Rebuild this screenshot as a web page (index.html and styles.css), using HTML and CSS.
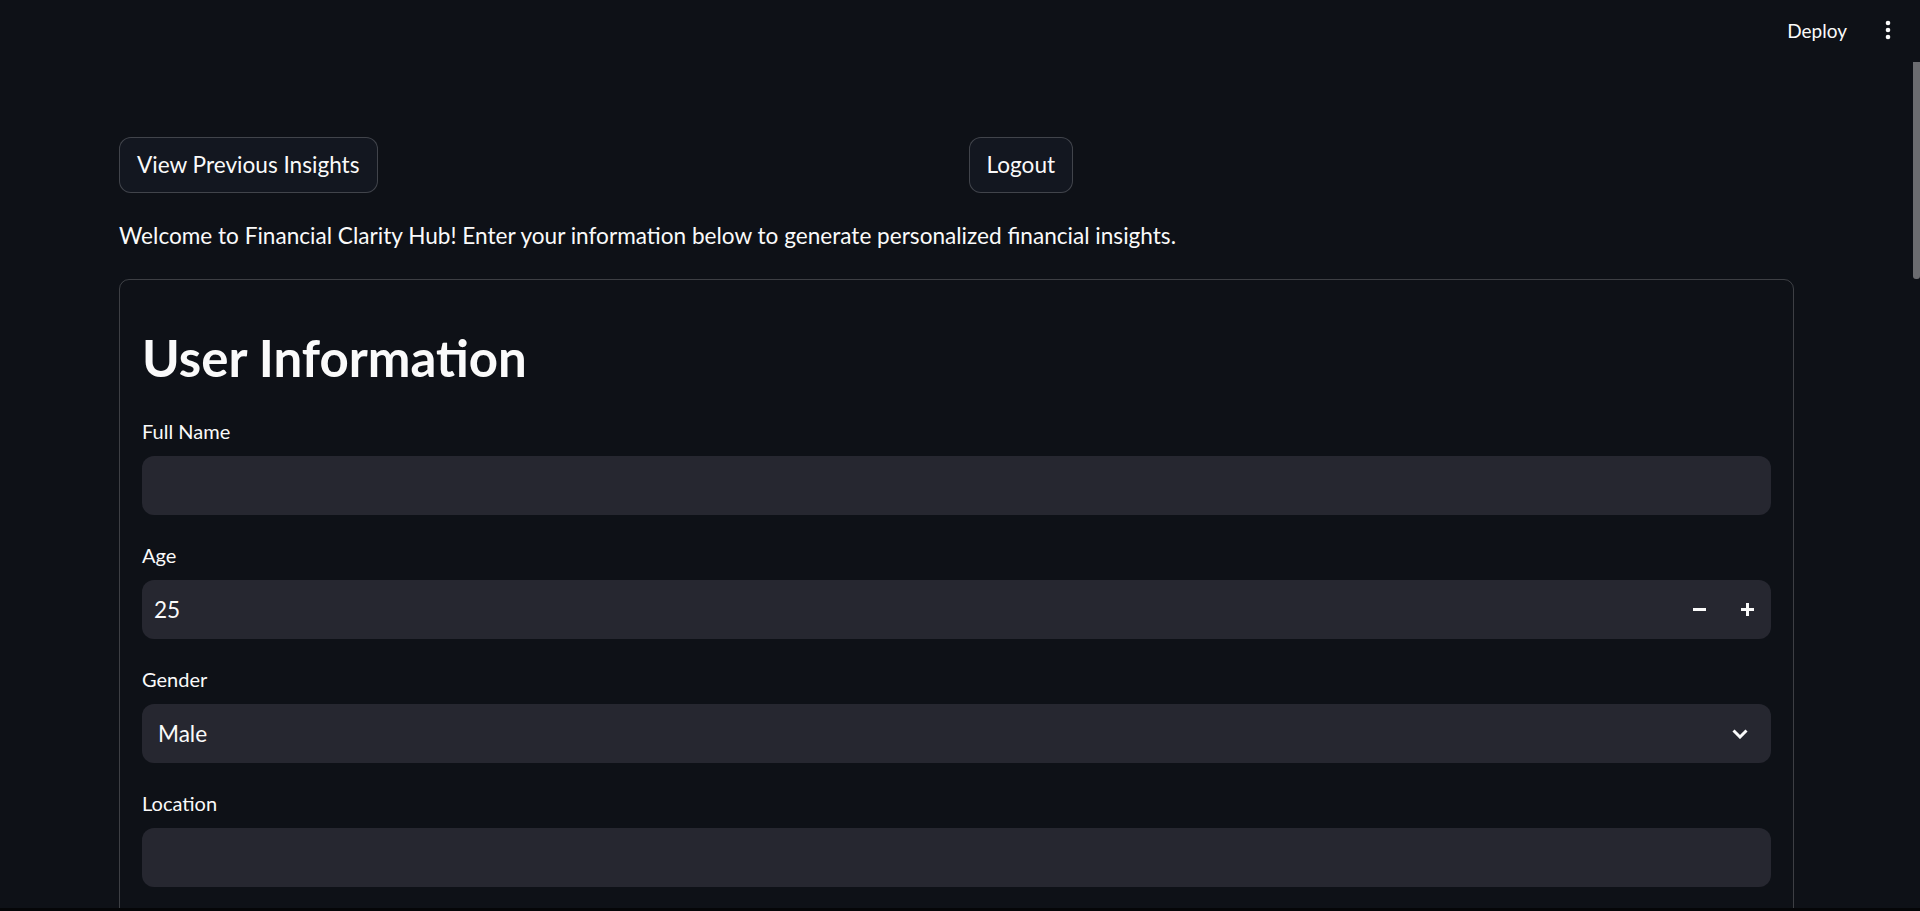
FILE: index.html
```html
<!DOCTYPE html>
<html lang="en">
<head>
<meta charset="utf-8">
<title>Financial Clarity Hub</title>
<link rel="stylesheet" href="styles.css">
</head>
<body>
<header class="topbar">
  <span class="deploy">Deploy</span>
  <span class="menu">
    <svg width="24" height="24" viewBox="0 0 24 24"><circle cx="12" cy="5" r="2.3"/><circle cx="12" cy="12" r="2.3"/><circle cx="12" cy="19" r="2.3"/></svg>
  </span>
</header>
<main class="main">
  <div class="btn-row">
    <div class="col"><button class="btn" type="button">View Previous Insights</button></div>
    <div class="col"><button class="btn" type="button">Logout</button></div>
  </div>
  <p class="welcome">Welcome to Financial Clarity Hub! Enter your information below to generate personalized financial insights.</p>
  <form class="card">
    <h2 class="card-title">User Information</h2>
    <div class="field">
      <label class="label">Full Name</label>
      <div class="input"></div>
    </div>
    <div class="field">
      <label class="label">Age</label>
      <div class="input number">
        <span class="value">25</span>
        <span class="steppers">
          <span class="step"><svg width="13" height="13" viewBox="0 0 13 13"><path d="M0 6.5H13" /></svg></span>
          <span class="step"><svg width="13" height="13" viewBox="0 0 13 13"><path d="M0 6.5H13M6.5 0V13" /></svg></span>
        </span>
      </div>
    </div>
    <div class="field">
      <label class="label">Gender</label>
      <div class="input select">
        <span class="value">Male</span>
        <svg class="chev" width="16" height="10" viewBox="0 0 16 10"><path d="M1.5 1.5L8 8L14.5 1.5" /></svg>
      </div>
    </div>
    <div class="field">
      <label class="label">Location</label>
      <div class="input"></div>
    </div>
  </form>
</main>
<div class="scroll-thumb"></div>
<div class="bottom-edge"></div>
</body>
</html>
```

FILE: styles.css
```css
* { box-sizing: border-box; }
html, body {
  margin: 0;
  height: 100%;
  overflow: hidden;
  background: #0e1117;
  color: #fafafa;
  font-family: Lato, "Noto Sans", sans-serif;
}
.topbar {
  position: fixed;
  top: 0; left: 0; right: 0;
  height: 60px;
  background: #0e1117;
  display: flex;
  align-items: center;
  justify-content: flex-end;
  padding-right: 20px;
  gap: 29px;
  z-index: 5;
}
.deploy {
  font-size: 19px;
  color: #fafafa;
}
.menu { display: flex; }
.menu svg { fill: #fafafa; display: block; }

.main {
  padding: 137px 126px 0 119px;
  display: flex;
  flex-direction: column;
  gap: 24px;
}
.btn-row {
  display: grid;
  grid-template-columns: 1fr 1fr;
  gap: 24px;
}
.col { display: flex; align-items: flex-start; }
.btn {
  height: 56px;
  padding: 0 17px;
  border: 1px solid rgba(250, 250, 250, 0.2);
  border-radius: 12px;
  background: #131720;
  color: #fafafa;
  font-family: inherit;
  font-size: 22.6px;
  line-height: 1;
}
.welcome {
  margin: 0;
  font-size: 22.6px;
  line-height: 38.4px;
}
.card {
  border: 1px solid rgba(250, 250, 250, 0.2);
  border-radius: 10px;
  padding: 0 22px 140px;
  display: flex;
  flex-direction: column;
  gap: 24px;
}
.card-title {
  margin: 0;
  padding: 47px 0 3px;
  font-size: 51px;
  line-height: 61px;
  font-weight: 700;
}
.field { display: flex; flex-direction: column; }
.label {
  font-size: 20px;
  line-height: 32px;
  height: 32px;
  margin-bottom: 9px;
}
.input {
  height: 59px;
  background: #262730;
  border-radius: 12px;
  display: flex;
  align-items: center;
  font-size: 22.6px;
}
.number { padding-left: 12px; }
.number .value { flex: 1; }
.steppers { display: flex; height: 100%; }
.step {
  width: 48px;
  height: 100%;
  display: flex;
  align-items: center;
  justify-content: center;
}
.step svg path { stroke: #fafafa; stroke-width: 3; fill: none; }
.select {
  padding: 0 23px 0 16px;
  justify-content: space-between;
}
.chev path { stroke: #fafafa; stroke-width: 3; fill: none; }

.scroll-thumb {
  position: fixed;
  right: 0;
  top: 62px;
  width: 7px;
  height: 217px;
  background: #6b6c70;
  border-radius: 0 0 3px 3px;
  z-index: 6;
}
.bottom-edge {
  position: fixed;
  left: 0; right: 0; bottom: 0;
  height: 3px;
  background: #050608;
  z-index: 6;
}
```
